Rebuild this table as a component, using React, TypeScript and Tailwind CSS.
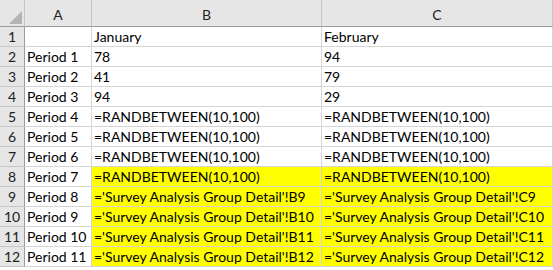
import React from 'react';

const rows: [string, string, string, boolean][] = [
  ['', 'January', 'February', false],
  ['Period 1', '78', '94', false],
  ['Period 2', '41', '79', false],
  ['Period 3', '94', '29', false],
  ['Period 4', '=RANDBETWEEN(10,100)', '=RANDBETWEEN(10,100)', false],
  ['Period 5', '=RANDBETWEEN(10,100)', '=RANDBETWEEN(10,100)', false],
  ['Period 6', '=RANDBETWEEN(10,100)', '=RANDBETWEEN(10,100)', false],
  ['Period 7', '=RANDBETWEEN(10,100)', '=RANDBETWEEN(10,100)', true],
  ['Period 8', "='Survey Analysis Group Detail'!B9", "='Survey Analysis Group Detail'!C9", true],
  ['Period 9', "='Survey Analysis Group Detail'!B10", "='Survey Analysis Group Detail'!C10", true],
  ['Period 10', "='Survey Analysis Group Detail'!B11", "='Survey Analysis Group Detail'!C11", true],
  ['Period 11', "='Survey Analysis Group Detail'!B12", "='Survey Analysis Group Detail'!C12", true],
];

const cell = 'h-[20px] border-r border-b border-[#d4d4d4] flex items-end px-[2px] pb-[1px] leading-[17px] whitespace-nowrap';

export default function App() {
  return (
    <div className="w-[553px] h-[270px] bg-white text-[14px] text-black" style={{ fontFamily: 'Lato, "Liberation Sans", sans-serif' }}>
      <div className="grid grid-cols-[25px_67px_230px_231px]">
        <div className="h-[27px] bg-[#e6e6e6] border-r border-b border-r-[#c6c6c6] border-b-[#9b9b9b] relative">
          <svg className="absolute right-[2px] bottom-[2px]" width="13" height="13" viewBox="0 0 13 13">
            <polygon points="13,0 13,13 0,13" fill="#b4b4b4" />
          </svg>
        </div>
        {['A', 'B', 'C'].map((c) => (
          <div key={c} className="h-[27px] bg-[#e6e6e6] border-r border-b border-r-[#c6c6c6] border-b-[#9b9b9b] flex items-center justify-center pt-[3px] leading-[17px] text-[#222]">
            {c}
          </div>
        ))}
        {rows.map(([a, b, c, hl], i) => (
          <React.Fragment key={i}>
            <div className="h-[20px] bg-[#e6e6e6] border-r border-b border-r-[#9b9b9b] border-b-[#c6c6c6] flex items-end justify-center pb-[1px] leading-[17px] text-[#222]">
              {i + 1}
            </div>
            <div className={cell}>{a}</div>
            <div className={`${cell} ${hl ? 'bg-[#ffff00]' : ''}`}>{b}</div>
            <div className={`${cell} ${hl ? 'bg-[#ffff00]' : ''}`}>{c}</div>
          </React.Fragment>
        ))}
      </div>
    </div>
  );
}
